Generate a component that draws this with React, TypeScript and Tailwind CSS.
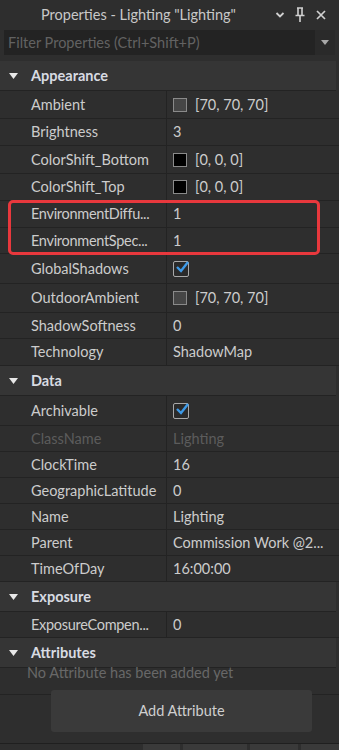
import React from 'react';

type Val =
  | { kind: 'text'; text: string; dim?: boolean }
  | { kind: 'color'; text: string; fill: string }
  | { kind: 'check' };

interface Prop {
  name: string;
  value: Val;
  h: number;
  dim?: boolean;
  tight?: boolean;
}

const appearance: Prop[] = [
  { name: 'Ambient', value: { kind: 'color', text: '[70, 70, 70]', fill: '#464646' }, h: 28 },
  { name: 'Brightness', value: { kind: 'text', text: '3' }, h: 27 },
  { name: 'ColorShift_Bottom', value: { kind: 'color', text: '[0, 0, 0]', fill: '#000000' }, h: 28 },
  { name: 'ColorShift_Top', value: { kind: 'color', text: '[0, 0, 0]', fill: '#000000' }, h: 27 },
];

const appearance2: Prop[] = [
  { name: 'GlobalShadows', value: { kind: 'check' }, h: 30 },
  { name: 'OutdoorAmbient', value: { kind: 'color', text: '[70, 70, 70]', fill: '#464646' }, h: 29 },
  { name: 'ShadowSoftness', value: { kind: 'text', text: '0' }, h: 26 },
  { name: 'Technology', value: { kind: 'text', text: 'ShadowMap' }, h: 27 },
];

const data: Prop[] = [
  { name: 'Archivable', value: { kind: 'check' }, h: 30 },
  { name: 'ClassName', value: { kind: 'text', text: 'Lighting' }, h: 26, dim: true },
  { name: 'ClockTime', value: { kind: 'text', text: '16' }, h: 26 },
  { name: 'GeographicLatitude', value: { kind: 'text', text: '0' }, h: 26 },
  { name: 'Name', value: { kind: 'text', text: 'Lighting' }, h: 26 },
  { name: 'Parent', value: { kind: 'text', text: 'Commission Work @2...' }, h: 26 },
  { name: 'TimeOfDay', value: { kind: 'text', text: '16:00:00' }, h: 26 },
];

function Checkbox() {
  return (
    <div className="relative w-[16px] h-[16px]">
      <div className="absolute inset-0 rounded-[2px] border-[1.5px] border-[#a8a8a8] bg-[#2a2a2a]" />
      <svg className="absolute left-[2px] top-[-1px]" width="15" height="14" viewBox="0 0 15 14">
        <path d="M2 7 L6 11 L13 2" fill="none" stroke="#3d9ae8" strokeWidth="2.4" />
      </svg>
    </div>
  );
}

function Value({ v, dim }: { v: Val; dim?: boolean }) {
  if (v.kind === 'check') return <Checkbox />;
  if (v.kind === 'color')
    return (
      <div className="flex items-center gap-[8px]">
        <div className="w-[14px] h-[14px] border border-[#8a8a8a]" style={{ background: v.fill }} />
        <span>{v.text}</span>
      </div>
    );
  return <span className={dim ? 'text-[#5c5c5c]' : ''}>{v.text}</span>;
}

function Row({ p }: { p: Prop }) {
  return (
    <div className="flex border-b border-[#232323]" style={{ height: p.h }}>
      <div
        className={`w-[167px] shrink-0 pl-[31px] flex items-center border-r border-[#232323] whitespace-nowrap overflow-hidden ${
          p.dim ? 'text-[#5c5c5c]' : ''
        } ${p.tight ? 'tracking-[-0.3px]' : ''}`}
      >
        {p.name}
      </div>
      <div className="flex-1 pl-[6px] flex items-center whitespace-nowrap overflow-hidden">
        <Value v={p.value} dim={p.dim} />
      </div>
    </div>
  );
}

function Section({ title }: { title: string }) {
  return (
    <div className="h-[30px] flex items-center bg-[#353535] border-b border-[#232323] mr-[3px]">
      <svg className="ml-[9px] mr-[13px]" width="9" height="6" viewBox="0 0 9 6">
        <path d="M0 0 H9 L4.5 6 Z" fill="#e8e8e8" />
      </svg>
      <span className="font-bold text-[#d8dbe2] text-[14.5px]">{title}</span>
    </div>
  );
}

export default function App() {
  return (
    <div
      className="w-[339px] h-[750px] overflow-hidden bg-[#2e2e2e] text-[#cccccc] text-[14.5px] flex flex-col"
      style={{ fontFamily: 'Lato, "Noto Sans", sans-serif' }}
    >
      {/* Title bar */}
      <div className="h-[30px] shrink-0 flex items-center relative">
        <div className="flex-1 text-center text-[14.5px] pr-[62px] text-[#c8c8c8]">
          Properties - Lighting "Lighting"
        </div>
        <div className="absolute right-[12px] top-[7px] flex items-center gap-[9px]">
          <svg width="10" height="16" viewBox="0 0 10 16">
            <path d="M1.5 6 L5 9.5 L8.5 6" fill="none" stroke="#d0d0d0" strokeWidth="1.8" />
          </svg>
          <svg width="12" height="16" viewBox="0 0 12 16">
            <path d="M3 1 H9 M4 1 V8 M8 1 V8 M1.5 8.5 H10.5 M6 9 V15" fill="none" stroke="#d0d0d0" strokeWidth="1.6" />
          </svg>
          <svg width="12" height="16" viewBox="0 0 12 16">
            <path d="M2 4 L10 12 M10 4 L2 12" fill="none" stroke="#d0d0d0" strokeWidth="1.7" />
          </svg>
        </div>
      </div>

      {/* Filter */}
      <div className="h-[25px] shrink-0 mx-[4px] flex bg-[#262626]">
        <div className="flex-1 flex items-center pl-[4px] text-[#626262] text-[14.5px] bg-[#232323]">
          Filter Properties (Ctrl+Shift+P)
        </div>
        <div className="w-[20px] flex items-center justify-center bg-[#2a2a2a]">
          <svg width="8" height="5" viewBox="0 0 8 5">
            <path d="M0 0 H8 L4 5 Z" fill="#a8a8a8" />
          </svg>
        </div>
      </div>

      <div className="h-[6px] shrink-0" />

      <Section title="Appearance" />
      {appearance.map((p) => (
        <Row key={p.name} p={p} />
      ))}
      <div className="relative">
        <Row p={{ name: 'EnvironmentDiffu...', value: { kind: 'text', text: '1' }, h: 27, tight: true }} />
        <Row p={{ name: 'EnvironmentSpec...', value: { kind: 'text', text: '1' }, h: 26, tight: true }} />
        <div className="absolute left-[8px] right-[19px] top-[-1px] bottom-[-1px] rounded-[5px] border-[3px] border-[#e8383d]" />
      </div>
      {appearance2.map((p) => (
        <Row key={p.name} p={p} />
      ))}

      <Section title="Data" />
      {data.map((p) => (
        <Row key={p.name} p={p} />
      ))}

      <Section title="Exposure" />
      <Row p={{ name: 'ExposureCompen...', value: { kind: 'text', text: '0' }, h: 26, tight: true }} />

      <Section title="Attributes" />
      <div className="h-[27px] shrink-0 border-b border-[#232323]">
        <div className="pl-[27px] -mt-[6px] text-[#686868]">No Attribute has been added yet</div>
      </div>
      <div className="flex -mt-[5px] pl-[51px]">
        <div className="w-[261px] h-[42px] rounded-[3px] bg-[#3a3a3a] flex items-center justify-center text-[#cfcfcf]">
          Add Attribute
        </div>
      </div>

      <div className="flex-1" />
      <div className="h-[7px] shrink-0 border-t border-[#1f1f1f] flex gap-[3px] pl-[143px]">
        <div className="w-[37px] bg-[#3a3a3a]" />
        <div className="w-[64px] bg-[#3a3a3a]" />
        <div className="w-[48px] bg-[#3a3a3a]" />
        <div className="flex-1 bg-[#3a3a3a]" />
      </div>
    </div>
  );
}
